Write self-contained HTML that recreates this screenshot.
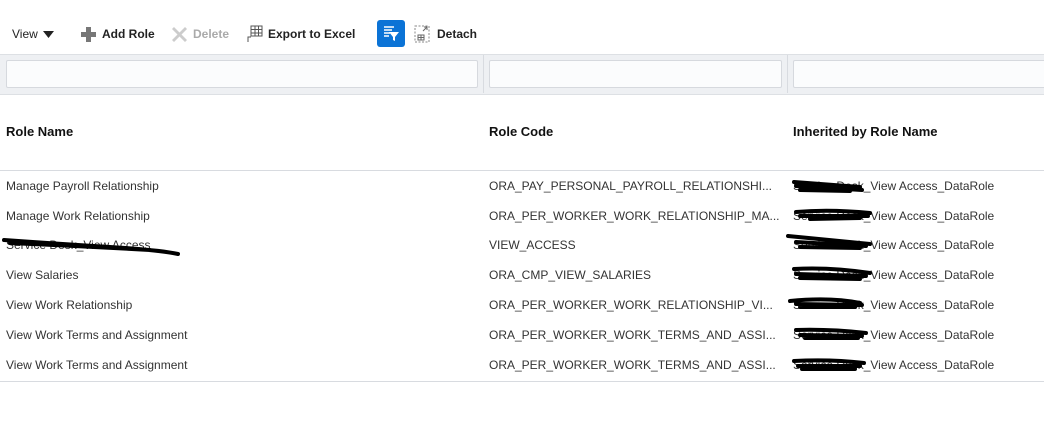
<!DOCTYPE html>
<html><head><style>
body{margin:0;width:1044px;height:446px;background:#fff;font-family:"Liberation Sans",sans-serif;position:relative;overflow:hidden;color:#333}
.a{position:absolute;white-space:nowrap}
.tb{font-size:12px;font-weight:bold;color:#222;top:27px}
.hd{font-size:13px;font-weight:bold;color:#111;top:124px}
.c{font-size:12px;color:#333}
</style></head><body>
<div class="a" style="left:12px;top:27px;font-size:12px;color:#222">View</div>
<svg class="a" style="left:43px;top:31px" width="11" height="8"><path d="M0 0h11L5.5 7z" fill="#222"/></svg>
<svg class="a" style="left:81px;top:27px" width="15" height="15"><path d="M5 0h5v5h5v5h-5v5H5v-5H0V5h5z" fill="#777"/></svg>
<div class="a tb" style="left:102px">Add Role</div>
<svg class="a" style="left:172px;top:27px" width="15" height="15"><path d="M2 0l5.5 5.5L13 0l2 2-5.5 5.5L15 13l-2 2-5.5-5.5L2 15 0 13l5.5-5.5L0 2z" fill="#ccc"/></svg>
<div class="a tb" style="left:193px;color:#aaa">Delete</div>
<svg class="a" style="left:247px;top:25px" width="16" height="18"><path d="M4 1h11v10H4zM4 4.5h11M4 8h11M8 1v10M11.5 1v10" stroke="#555" fill="none"/><path d="M1 17v-5h3" stroke="#555" fill="none"/></svg>
<div class="a tb" style="left:268px">Export to Excel</div>
<div class="a" style="left:377px;top:20px;width:28px;height:27px;background:#0b73d6;border-radius:3px"></div>
<svg class="a" style="left:383px;top:26px" width="16" height="16"><path d="M1 1h10M1 4h8M1 7h6M1 10h5" stroke="#fff" stroke-width="1.5"/><path d="M6 6h10l-4 5v4l-2-1v-3z" fill="#fff"/></svg>
<svg class="a" style="left:414px;top:25px" width="16" height="18"><rect x="1" y="1" width="14" height="16" stroke="#888" stroke-dasharray="2 1.5" fill="none"/><path d="M4 10h6v5H4zM4 12.5h6M7 10v5M9 6l4-4M10 2h3v3" stroke="#666" fill="none"/></svg>
<div class="a tb" style="left:437px">Detach</div>

<div class="a" style="left:0;top:54px;width:1044px;height:39px;background:#eef0f3;border-top:1px solid #dde0e4;border-bottom:1px solid #dde0e4"></div>
<div class="a" style="left:483px;top:55px;width:1px;height:38px;background:#d8dbe0"></div>
<div class="a" style="left:787px;top:55px;width:1px;height:38px;background:#d8dbe0"></div>
<div class="a" style="left:6px;top:60px;width:470px;height:26px;background:#fbfcfd;border:1px solid #d6d9de;border-radius:2px"></div>
<div class="a" style="left:489px;top:60px;width:291px;height:26px;background:#fbfcfd;border:1px solid #d6d9de;border-radius:2px"></div>
<div class="a" style="left:793px;top:60px;width:260px;height:26px;background:#fbfcfd;border:1px solid #d6d9de;border-radius:2px"></div>

<div class="a hd" style="left:6px">Role Name</div>
<div class="a hd" style="left:489px">Role Code</div>
<div class="a hd" style="left:793px">Inherited by Role Name</div>
<div class="a" style="left:0;top:170px;width:1044px;height:1px;background:#d8dbe0"></div>
<div class="a" style="left:0;top:381px;width:1044px;height:1px;background:#d8dbe0"></div>

<div class="a c" style="left:6px;top:179px">Manage Payroll Relationship</div>
<div class="a c" style="left:6px;top:209px">Manage Work Relationship</div>
<div class="a c" style="left:6px;top:238px">Service Desk_View Access</div>
<div class="a c" style="left:6px;top:268px">View Salaries</div>
<div class="a c" style="left:6px;top:298px">View Work Relationship</div>
<div class="a c" style="left:6px;top:328px">View Work Terms and Assignment</div>
<div class="a c" style="left:6px;top:358px">View Work Terms and Assignment</div>

<div class="a c" style="left:489px;top:179px">ORA_PAY_PERSONAL_PAYROLL_RELATIONSHI...</div>
<div class="a c" style="left:489px;top:209px">ORA_PER_WORKER_WORK_RELATIONSHIP_MA...</div>
<div class="a c" style="left:489px;top:238px">VIEW_ACCESS</div>
<div class="a c" style="left:489px;top:268px">ORA_CMP_VIEW_SALARIES</div>
<div class="a c" style="left:489px;top:298px">ORA_PER_WORKER_WORK_RELATIONSHIP_VI...</div>
<div class="a c" style="left:489px;top:328px">ORA_PER_WORKER_WORK_TERMS_AND_ASSI...</div>
<div class="a c" style="left:489px;top:358px">ORA_PER_WORKER_WORK_TERMS_AND_ASSI...</div>

<div class="a c" style="left:793px;top:179px">Service Desk_View Access_DataRole</div>
<div class="a c" style="left:793px;top:209px">Service Desk_View Access_DataRole</div>
<div class="a c" style="left:793px;top:238px">Service Desk_View Access_DataRole</div>
<div class="a c" style="left:793px;top:268px">Service Desk_View Access_DataRole</div>
<div class="a c" style="left:793px;top:298px">Service Desk_View Access_DataRole</div>
<div class="a c" style="left:793px;top:328px">Service Desk_View Access_DataRole</div>
<div class="a c" style="left:793px;top:358px">Service Desk_View Access_DataRole</div>

<svg class="a" style="left:0;top:0" width="1044" height="446">
<g stroke="#000" stroke-width="4" fill="none" stroke-linecap="round">
<path d="M4 240 Q60 244 110 247 T178 254 M10 243 Q80 246 150 250"/>
<path d="M794 182 Q820 184 860 187 M796 186 L862 190 M800 190 L850 191"/>
<path d="M796 212 Q830 209 870 213 M800 216 L868 216 M810 219 L860 218"/>
<path d="M788 236 Q830 240 870 244 M796 242 L866 246 M800 247 L860 248"/>
<path d="M794 269 Q830 267 870 273 M796 274 L866 276 M800 278 L860 279"/>
<path d="M790 301 Q830 297 860 303 M796 304 L862 305 M800 307 L855 307"/>
<path d="M796 330 Q830 329 866 333 M800 335 L862 336 M805 338 L858 338"/>
<path d="M794 361 Q830 359 864 363 M798 366 L860 366 M802 369 L855 369"/>
</g></svg>
</body></html>
